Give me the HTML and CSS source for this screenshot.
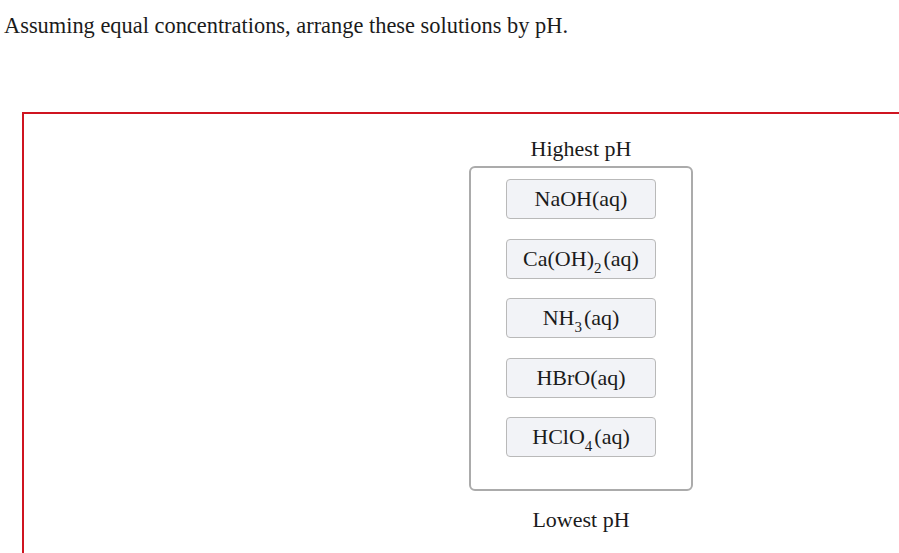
FILE: index.html
```html
<!DOCTYPE html>
<html lang="en">
<head>
  <meta charset="UTF-8">
  <title>Arrange by pH</title>
  <link rel="stylesheet" href="styles.css">
</head>
<body>
  <p class="prompt">Assuming equal concentrations, arrange these solutions by pH.</p>

  <div class="answer-area">
    <div class="rank">
      <div class="rank-label">Highest pH</div>
      <ul class="rank-list">
        <li class="chip">NaOH(aq)</li>
        <li class="chip">Ca(OH)<sub>2</sub>(aq)</li>
        <li class="chip">NH<sub>3</sub>(aq)</li>
        <li class="chip">HBrO(aq)</li>
        <li class="chip">HClO<sub>4</sub>(aq)</li>
      </ul>
      <div class="rank-label bottom">Lowest pH</div>
    </div>
  </div>
</body>
</html>
```

FILE: styles.css
```css
* {
  margin: 0;
  padding: 0;
  box-sizing: border-box;
}
body {
  font-family: "Liberation Serif", "Times New Roman", serif;
  color: #1b1b1b;
  background: white;
  overflow: hidden;
}
.prompt {
  font-size: 22.4px;
  line-height: 25px;
  padding: 13px 0 0 4px;
}
.answer-area {
  margin: 74px 0 0 22px;
  border-top: 2px solid #cf1420;
  border-left: 2px solid #cf1420;
  height: 500px;
}
.rank {
  width: 224px;
  margin-left: 445px;
  text-align: center;
  font-size: 22px;
}
.rank-label {
  margin-top: 22px;
  line-height: 25px;
}
.rank-label.bottom {
  margin-top: 16px;
}
.rank-list {
  list-style: none;
  margin-top: 5px;
  border: 2px solid #ababab;
  border-radius: 6px;
  padding: 11px 35px 32px;
  display: flex;
  flex-direction: column;
  gap: 19.5px;
}
.chip {
  height: 40px;
  line-height: 38px;
  background: #f2f3f7;
  border: 1px solid #b9b9b9;
  border-radius: 4px;
}
.chip sub {
  font-size: 15px;
  line-height: 0;
  vertical-align: -7px;
  margin-right: 2px;
}
```
